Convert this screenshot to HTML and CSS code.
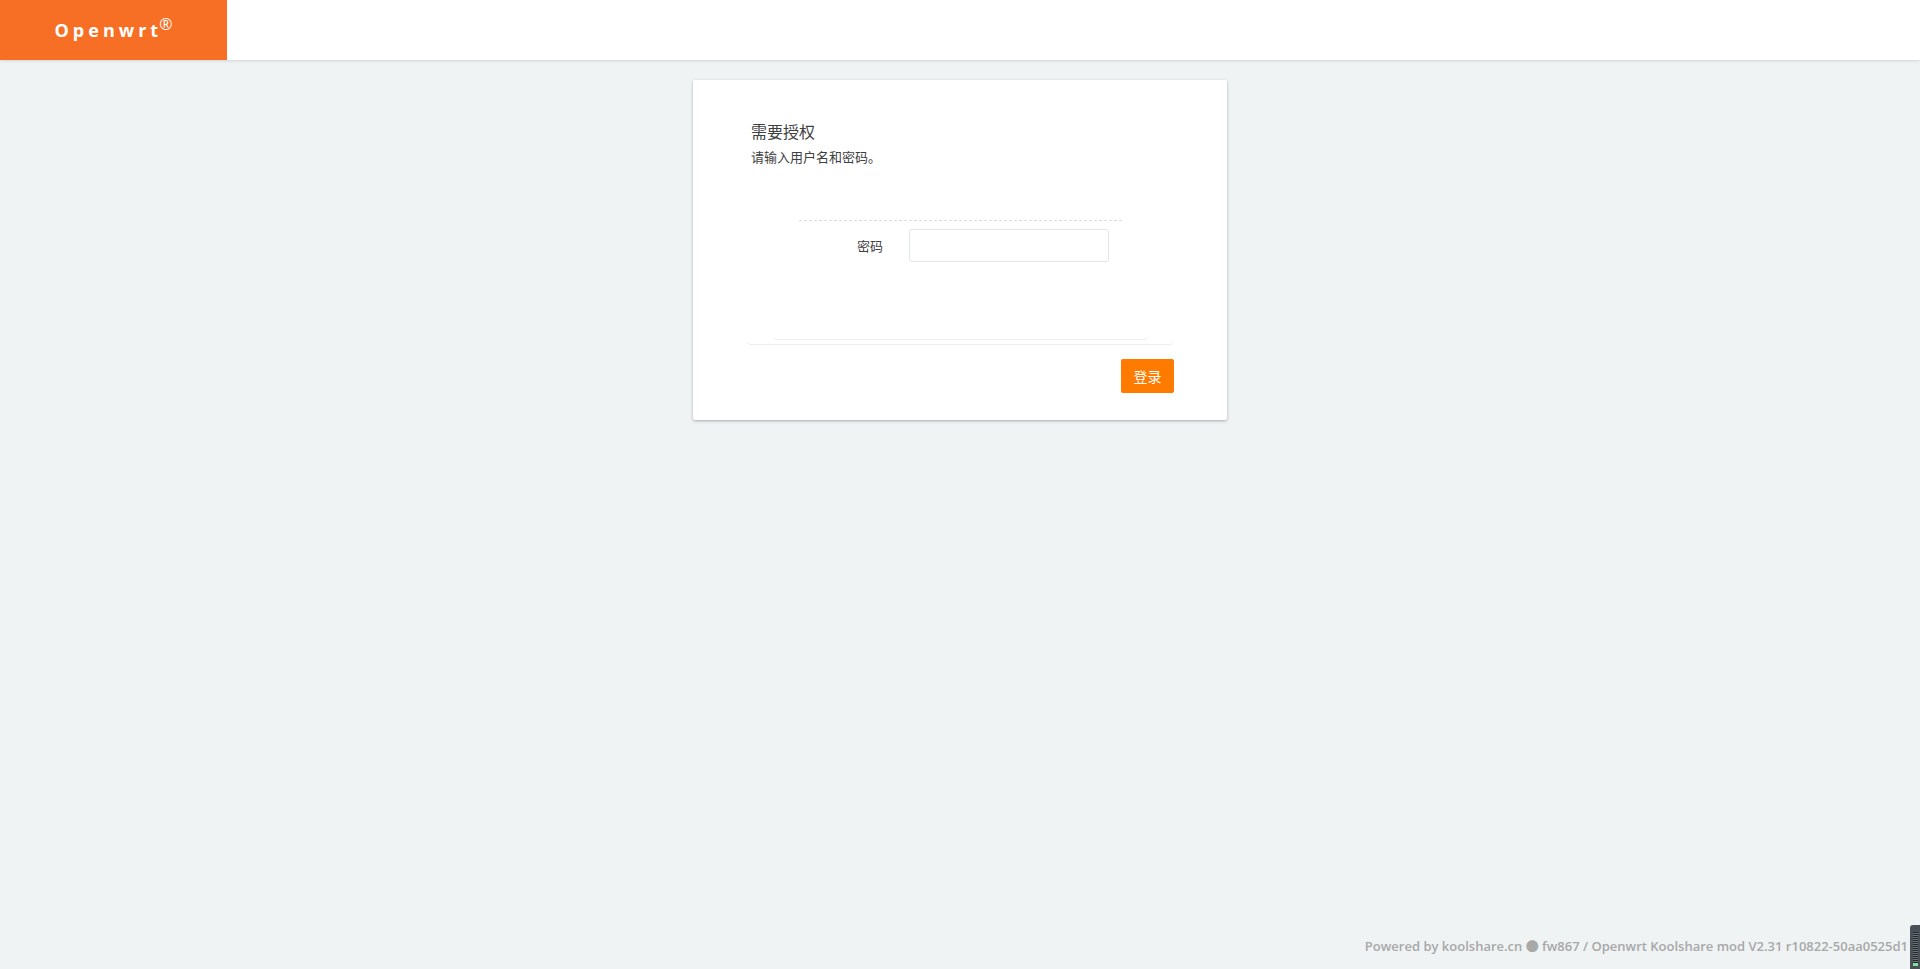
FILE: index.html
```html
<!DOCTYPE html>
<html lang="zh-cn">
<head>
    <meta charset="UTF-8">
    <title>Openwrt - 需要授权</title>
    <link rel="stylesheet" href="styles.css">
</head>
<body>
    <header class="topbar">
        <a class="brand" href="#">Openwrt<sup>®</sup></a>
    </header>

    <main class="content">
        <form class="login-card">
            <div class="login-map">
                <h2>需要授权</h2>
                <p class="map-desc">请输入用户名和密码。</p>
                <div class="section">
                    <div class="section-inner">
                        <div class="field-row">
                            <label class="field-label" for="password">密码</label>
                            <input class="field-input" id="password" type="password">
                        </div>
                    </div>
                </div>
            </div>
            <div class="login-actions">
                <button class="btn-login" type="button">登录</button>
            </div>
        </form>
    </main>

    <footer class="site-footer">Powered by koolshare.cn ● fw867 / Openwrt Koolshare mod V2.31 r10822-50aa0525d1</footer>

    <!-- 右下角悬浮条 -->
    <div class="side-widget"><span class="side-widget-bars"></span></div>
</body>
</html>
```

FILE: styles.css
```css
:root {
    --brand-orange: #f76f24;
    --btn-orange: #ff7b00;
    --page-bg: #eff3f4;
    --line: #eeeeee;
    --text-dark: #404040;
}

* {
    margin: 0;
    padding: 0;
    box-sizing: border-box;
}

body {
    font-family: 'Open Sans', 'Noto Sans CJK SC', sans-serif;
    background-color: var(--page-bg);
    color: var(--text-dark);
    min-height: 100vh;
    display: flex;
    flex-direction: column;
    overflow: hidden;
    position: relative;
}

.topbar {
    height: 60px;
    background: white;
    box-shadow: 0 1px 3px rgba(0, 0, 0, 0.12);
}

.brand {
    display: flex;
    align-items: center;
    justify-content: center;
    width: 227px;
    height: 60px;
    background: var(--brand-orange);
    color: white;
    text-decoration: none;
    font-size: 18px;
    font-weight: 700;
    letter-spacing: 4px;
}

.brand sup {
    font-size: 16px;
    font-weight: 400;
    letter-spacing: 0;
    line-height: 1;
    margin-top: -12px;
    margin-left: -3px;
}

.content {
    flex: 1;
    display: flex;
    justify-content: center;
    padding-top: 20px;
}

.login-card {
    width: 534px;
    height: 340px;
    background: white;
    border-radius: 2px;
    padding: 40px 53px 0 54px;
    box-shadow: 0 1px 3px rgba(0, 0, 0, 0.3);
}

.login-map {
    height: 225px;
    border-bottom: 1px solid var(--line);
    border-radius: 4px;
}

.login-map h2 {
    font-size: 16px;
    font-weight: 400;
    line-height: 24px;
    padding-left: 4px;
}

.map-desc {
    font-size: 13px;
    line-height: 20px;
    margin-top: 3px;
    padding-left: 4px;
}

.section {
    height: 120px;
    margin: 53px 26px 0;
    border-bottom: 1px solid var(--line);
    border-radius: 4px;
}

.section-inner {
    margin-left: 26px;
    margin-right: 26px;
    border-top: 1px dashed #dddddd;
    padding-top: 8px;
}

.field-row {
    display: flex;
    align-items: center;
}

.field-label {
    width: 84px;
    padding-right: 0;
    text-align: right;
    font-size: 13px;
}

.field-input {
    width: 200px;
    height: 33px;
    margin-left: 26px;
    border: 1px solid #dfe5e8;
    border-radius: 3px;
    background: white;
}

.login-actions {
    display: flex;
    justify-content: flex-end;
    padding-top: 14px;
}

.btn-login {
    width: 53px;
    height: 34px;
    background: var(--btn-orange);
    color: white;
    border: none;
    border-radius: 2px;
    font-family: inherit;
    font-size: 14px;
}

.site-footer {
    text-align: right;
    padding: 0 12px 14px 0;
    font-size: 13px;
    line-height: 18px;
    font-weight: 600;
    color: #a8a8a8;
}

.side-widget {
    position: absolute;
    right: 0;
    bottom: 0;
    width: 10px;
    height: 44px;
    background: #4a5058;
    border-radius: 3px 0 0 0;
}

.side-widget-bars {
    display: block;
    width: 5px;
    height: 34px;
    margin: 7px 0 0 3px;
    background: repeating-linear-gradient(to bottom, #23272c 0, #23272c 1px, #6d747c 1px, #6d747c 2px);
    border-bottom: 3px solid #7fe0a0;
}
```
